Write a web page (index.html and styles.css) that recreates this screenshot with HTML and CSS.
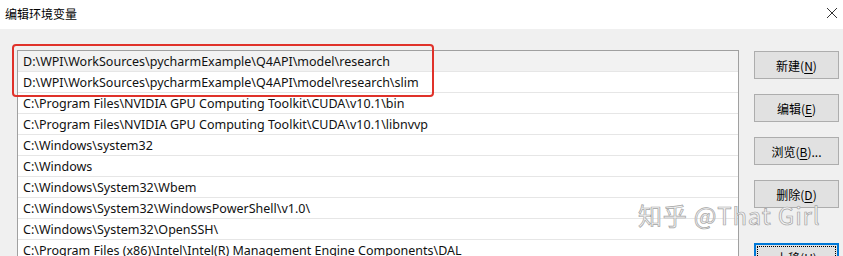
FILE: index.html
```html
<!DOCTYPE html>
<html>
<head>
<meta charset="utf-8">
<link rel="stylesheet" href="styles.css">
</head>
<body>
<div class="dialog">
  <div class="titlebar">
    <span class="title">编辑环境变量</span>
    <span class="close">
      <svg width="12" height="12" viewBox="0 0 12 12"><path d="M1 1L11 11M11 1L1 11" stroke="#333" stroke-width="1"/></svg>
    </span>
  </div>
  <div class="main">
    <div class="list">
      <div class="row selected">D:\WPI\WorkSources\pycharmExample\Q4API\model\research</div>
      <div class="row">D:\WPI\WorkSources\pycharmExample\Q4API\model\research\slim</div>
      <div class="row">C:\Program Files\NVIDIA GPU Computing Toolkit\CUDA\v10.1\bin</div>
      <div class="row">C:\Program Files\NVIDIA GPU Computing Toolkit\CUDA\v10.1\libnvvp</div>
      <div class="row">C:\Windows\system32</div>
      <div class="row">C:\Windows</div>
      <div class="row">C:\Windows\System32\Wbem</div>
      <div class="row">C:\Windows\System32\WindowsPowerShell\v1.0\</div>
      <div class="row">C:\Windows\System32\OpenSSH\</div>
      <div class="row">C:\Program Files (x86)\Intel\Intel(R) Management Engine Components\DAL</div>
      <div class="highlight"></div>
    </div>
    <div class="buttons">
      <div class="btn">新建(<u>N</u>)</div>
      <div class="btn">编辑(<u>E</u>)</div>
      <div class="btn">浏览(<u>B</u>)...</div>
      <div class="btn">删除(<u>D</u>)</div>
      <div class="btn focus spaced"><span class="focusring">上移(<u>U</u>)</span></div>
    </div>
  </div>
  <div class="watermark">知乎 @That Girl</div>
</div>
</body>
</html>
```
FILE: styles.css
```css
html, body {
  margin: 0;
  padding: 0;
}
body {
  width: 843px;
  height: 256px;
  overflow: hidden;
  background: #f0f0f0;
  font-family: "Microsoft YaHei", "Noto Sans", "Noto Sans CJK SC", sans-serif;
}
.dialog {
  position: relative;
  width: 843px;
  height: 256px;
  overflow: hidden;
}
.titlebar {
  height: 29px;
  background: #ffffff;
  display: flex;
  align-items: center;
  justify-content: space-between;
  padding: 0 5px 0 5px;
  box-sizing: border-box;
}
.title {
  font-family: "Noto Sans CJK SC", sans-serif;
  font-size: 12px;
  color: #000;
  margin-top: -2px;
}
.close {
  display: flex;
  margin-top: -3px;
}
.main {
  display: flex;
  padding: 21px 0 0 17px;
  gap: 15px;
}
.list {
  position: relative;
  width: 722px;
  height: 206px;
  box-sizing: border-box;
  border: 1px solid #a0a0a0;
  border-bottom: none;
  background: #ffffff;
}
.row {
  height: 21px;
  box-sizing: border-box;
  border-bottom: 1px solid #e6e6e6;
  padding: 2px 0 0 5px;
  font-family: "Noto Sans", sans-serif;
  font-size: 12.5px;
  line-height: 18px;
  color: #111;
  white-space: nowrap;
}
.row.selected {
  background: #f2f2f2;
}
.highlight {
  position: absolute;
  left: -6px;
  top: -7px;
  width: 418px;
  height: 49px;
  border: 2px solid #e0322a;
  border-radius: 4px;
}
.buttons {
  display: flex;
  flex-direction: column;
  gap: 15px;
  padding-top: 1px;
}
.btn {
  width: 85px;
  height: 28px;
  flex: none;
  box-sizing: border-box;
  background: #e1e1e1;
  border: 1px solid #adadad;
  font-family: "Noto Sans CJK SC", sans-serif;
  font-size: 12px;
  color: #000;
  display: flex;
  align-items: center;
  justify-content: center;
}
.btn u {
  text-underline-offset: 2px;
}
.btn.spaced {
  margin-top: 20px;
}
.btn.focus {
  border: 2px solid #0078d7;
  padding: 1px;
}
.focusring {
  flex: 1;
  align-self: stretch;
  border: 1px dotted #000;
  display: flex;
  align-items: center;
  justify-content: center;
}
.watermark {
  position: absolute;
  left: 638px;
  top: 197px;
  font-family: "Noto Sans CJK SC", sans-serif;
  font-size: 24px;
  color: #f4f4f4;
  letter-spacing: 0.8px;
  -webkit-text-stroke: 0.7px #a4a4a4;
}
```
